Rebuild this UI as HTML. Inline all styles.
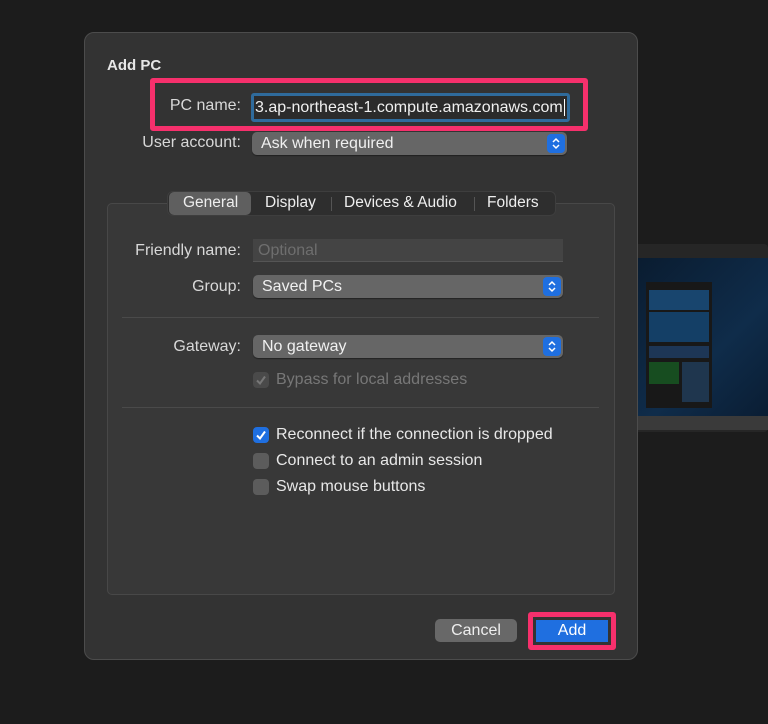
<!DOCTYPE html>
<html><head><meta charset="utf-8"><style>
*{margin:0;padding:0;box-sizing:border-box}
body{width:768px;height:724px;background:#1c1c1c;position:relative;overflow:hidden;font-family:"Liberation Sans",sans-serif;color:#dedede;font-size:16px}
.a{position:absolute}
.lbl{position:absolute;text-align:right;color:#d8d8d8;font-size:16px}
.pop{position:absolute;background:#666;border-radius:5px;height:23px;color:#f0f0f0;padding-left:9px;line-height:23px;box-shadow:0 1px 1px rgba(0,0,0,.4)}
.step{position:absolute;right:2px;top:2px;width:18px;height:19px;background:#1f6fe0;border-radius:4px}
.step svg{position:absolute;left:4px;top:3px}
.cb{position:absolute;width:16px;height:16px;border-radius:4px;background:#5c5c5c}
.ct{position:absolute;font-size:16px;color:#e8e8e8;line-height:18px}
.tab{position:absolute;top:194px;color:#eee;font-size:15.5px}
</style></head><body>
<!-- laptop -->
<div class="a" style="left:620px;top:244px;width:148px;height:188px;background:#262626;border-radius:4px"></div>
<div class="a" style="left:637px;top:258px;width:131px;height:158px;background:linear-gradient(135deg,#0a1c30,#0f2c4a 60%,#0a1d33)"></div>
<div class="a" style="left:646px;top:282px;width:66px;height:126px;background:#181818"></div>
<div class="a" style="left:649px;top:290px;width:60px;height:20px;background:#18456e"></div>
<div class="a" style="left:649px;top:312px;width:60px;height:30px;background:#143f66"></div>
<div class="a" style="left:649px;top:346px;width:60px;height:12px;background:#1d3656"></div>
<div class="a" style="left:649px;top:362px;width:30px;height:22px;background:#174d20"></div>
<div class="a" style="left:682px;top:362px;width:27px;height:40px;background:#1f364e"></div>
<div class="a" style="left:637px;top:416px;width:131px;height:14px;background:#3a3a3a"></div>
<!-- dialog -->
<div class="a" style="left:84px;top:32px;width:554px;height:628px;background:#333;border:1px solid #4c4c4c;border-radius:10px"></div>
<div class="a" style="left:107px;top:57px;font-weight:bold;font-size:15px;color:#e6e6e6">Add PC</div>
<div class="a" style="left:150px;top:78px;width:438px;height:53px;border:5px solid #f6306c;border-radius:3px"></div>
<div class="lbl" style="left:120px;width:121px;top:97px">PC name:</div>
<div class="a" style="left:251px;top:93px;width:319px;height:29px;border:3px solid #2f6b9c;border-radius:3px;background:#2b2b2b;color:#f0f0f0;padding-left:1px;line-height:23px;white-space:nowrap;overflow:hidden;font-size:16px">3.ap-northeast-1.compute.amazonaws.com<span style="border-left:1px solid #fff;margin-left:1px"></span></div>
<div class="lbl" style="left:90px;width:151px;top:134px">User account:</div>
<div class="pop" style="left:252px;top:132px;width:315px">Ask when required<div class="step"><svg width="10" height="13"><path d="M2 5 L5 2 L8 5 M2 8 L5 11 L8 8" stroke="#fff" stroke-width="1.5" fill="none"/></svg></div></div>
<!-- group box -->
<div class="a" style="left:107px;top:203px;width:508px;height:392px;border:1px solid #484848;border-radius:5px;background:#383838"></div>
<div class="a" style="left:167px;top:191px;width:389px;height:25px;background:#2e2e2e;border:1px solid #3e3e3e;border-radius:6px"></div>
<div class="a" style="left:169px;top:192px;width:82px;height:23px;background:#5f5f5f;border-radius:5px"></div>
<div class="tab" style="left:183px">General</div>
<div class="tab" style="left:265px">Display</div>
<div class="a" style="left:331px;top:197px;width:1px;height:14px;background:#555"></div>
<div class="tab" style="left:344px">Devices &amp; Audio</div>
<div class="a" style="left:474px;top:197px;width:1px;height:14px;background:#555"></div>
<div class="tab" style="left:487px">Folders</div>
<div class="lbl" style="left:90px;width:151px;top:242px">Friendly name:</div>
<div class="a" style="left:253px;top:239px;width:310px;height:23px;background:#444;border-bottom:1px solid #555;color:#6e6e6e;padding-left:5px;line-height:23px">Optional</div>
<div class="lbl" style="left:100px;width:141px;top:278px">Group:</div>
<div class="pop" style="left:253px;top:275px;width:310px">Saved PCs<div class="step"><svg width="10" height="13"><path d="M2 5 L5 2 L8 5 M2 8 L5 11 L8 8" stroke="#fff" stroke-width="1.5" fill="none"/></svg></div></div>
<div class="a" style="left:122px;top:317px;width:477px;height:1px;background:#4a4a4a"></div>
<div class="lbl" style="left:100px;width:141px;top:338px">Gateway:</div>
<div class="pop" style="left:253px;top:335px;width:310px">No gateway<div class="step"><svg width="10" height="13"><path d="M2 5 L5 2 L8 5 M2 8 L5 11 L8 8" stroke="#fff" stroke-width="1.5" fill="none"/></svg></div></div>
<div class="cb" style="left:253px;top:372px;background:#4a4a4a"><svg width="16" height="16"><path d="M4 8.5 L7 11.5 L12 4.5" stroke="#777" stroke-width="2" fill="none"/></svg></div>
<div class="ct" style="left:276px;top:371px;color:#777">Bypass for local addresses</div>
<div class="a" style="left:122px;top:407px;width:477px;height:1px;background:#4a4a4a"></div>
<div class="cb" style="left:253px;top:427px;background:#1f6fe0"><svg width="16" height="16"><path d="M4 8.5 L7 11.5 L12 4.5" stroke="#fff" stroke-width="2" fill="none"/></svg></div>
<div class="ct" style="left:276px;top:426px">Reconnect if the connection is dropped</div>
<div class="cb" style="left:253px;top:453px"></div>
<div class="ct" style="left:276px;top:452px">Connect to an admin session</div>
<div class="cb" style="left:253px;top:479px"></div>
<div class="ct" style="left:276px;top:478px">Swap mouse buttons</div>
<!-- buttons -->
<div class="a" style="left:435px;top:619px;width:82px;height:23px;background:#686868;border-radius:5px;text-align:center;line-height:23px;color:#eee">Cancel</div>
<div class="a" style="left:528px;top:612px;width:88px;height:38px;border:5px solid #f6306c;border-radius:3px"></div>
<div class="a" style="left:536px;top:620px;width:72px;height:22px;background:#1f6fe0;text-align:center;line-height:22px;color:#fff">Add</div>
</body></html>
